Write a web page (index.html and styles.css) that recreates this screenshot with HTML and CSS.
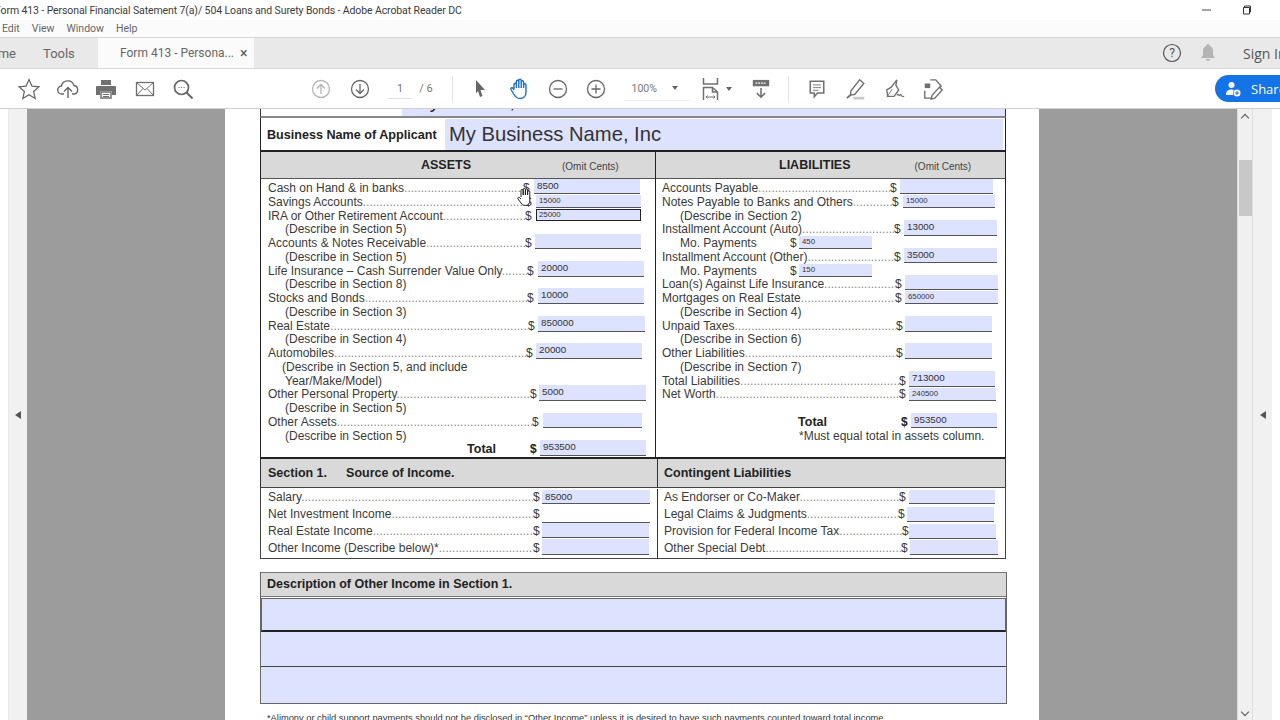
FILE: index.html
```html
<!DOCTYPE html>
<html lang="en">
<head>
<meta charset="utf-8">
<title>Form 413</title>
<link rel="stylesheet" href="styles.css">
</head>
<body>
<div class="app">
  <div class="titlebar">
    <span class="title">Form 413 - Personal Financial Satement 7(a)/ 504 Loans and Surety Bonds - Adobe Acrobat Reader DC</span>
    <div class="winctl">
      <svg class="win-min" width="12" height="12" viewBox="0 0 12 12"><path d="M1 6h9" stroke="#444" fill="none"/></svg>
      <svg class="win-max" width="12" height="12" viewBox="0 0 12 12"><path d="M2.500 3.500h6v6.500h-6zM3.500 3.500v-1.500h6v6h-1" stroke="#333" fill="none"/></svg>
    </div>
  </div>
  <div class="menubar"><span>Edit</span><span>View</span><span>Window</span><span>Help</span></div>
  <div class="tabbar">
    <span class="tab-home">Home</span>
    <span class="tab-tools">Tools</span>
    <div class="tab-active"><span>Form 413 - Persona...</span><b>×</b></div>
    <div class="tab-right">
      <svg width="20" height="20" viewBox="0 0 20 20"><circle cx="10" cy="10" r="8.500" fill="none" stroke="#555" stroke-width="1.200"/><text x="10" y="14" text-anchor="middle" class="q">?</text></svg>
      <svg class="bell" width="18" height="20" viewBox="0 0 18 20"><path d="M9 1c1 0 1.400.7 1.400 1.500C13 3.400 14 5.500 14 8v4l2 3H2l2-3V8c0-2.500 1-4.600 3.600-5.500C7.600 1.700 8 1 9 1zM7 16h4c0 1.200-.9 2-2 2s-2-.8-2-2z" fill="#b4b4b4"/></svg>
      <span class="signin">Sign In</span>
    </div>
  </div>
  <div class="toolbar">
    <div class="tb-group tb-left">
      <div class="tb"><svg width="24" height="24" viewBox="0 0 24 24"><path d="M12 2.500l2.900 6.600 7.100.7-5.400 4.700 1.600 7-6.200-3.700-6.200 3.700 1.600-7L2 9.800l7.100-.7z" fill="none" stroke="#666" stroke-width="1.200"/></svg></div>
      <div class="tb"><svg width="24" height="24" viewBox="0 0 24 24"><path d="M8 17H6a4 4 0 0 1-.6-8A6.500 6.500 0 0 1 18 8.500 4.300 4.300 0 0 1 18 17h-2M12 21v-10M8 14.500l4-4 4 4" fill="none" stroke="#666" stroke-width="1.400"/></svg></div>
      <div class="tb"><svg class="nudge" width="24" height="24" viewBox="0 0 24 24"><path d="M7 3h10v5H7zM3 9h18a1 1 0 0 1 1 1v8h-4v-4H6v4H2v-8a1 1 0 0 1 1-1z" fill="#707070"/><path d="M7 15h10v6H7z" fill="#fff" stroke="#707070" stroke-width="1.500"/><path d="M9 17.500h6M9 19.500h6" stroke="#707070"/></svg></div>
      <div class="tb"><svg width="24" height="24" viewBox="0 0 24 24"><rect x="3.500" y="5.500" width="17" height="13" fill="none" stroke="#707070" stroke-width="1.300"/><path d="M4 6l8 7 8-7M4 18l6-6.500M20 18l-6-6.500" fill="none" stroke="#707070"/></svg></div>
      <div class="tb"><svg class="nudge" width="24" height="24" viewBox="0 0 24 24"><circle cx="10.500" cy="10.500" r="7" fill="none" stroke="#666" stroke-width="1.700"/><path d="M15.500 15.500l6 6" stroke="#666" stroke-width="2"/><path d="M7.500 10.500h1M10 10.500h1M12.500 10.500h1" stroke="#666"/></svg></div>
    </div>
    <div class="tb-group tb-page">
      <div class="tb"><svg width="20" height="20" viewBox="0 0 20 20"><circle cx="10" cy="10" r="8.500" fill="none" stroke="#b5b5b5" stroke-width="1.300"/><path d="M10 15V5.500M6 9.500l4-4 4 4" fill="none" stroke="#b5b5b5" stroke-width="1.300"/></svg></div>
      <div class="tb"><svg width="20" height="20" viewBox="0 0 20 20"><circle cx="10" cy="10" r="8.500" fill="none" stroke="#666" stroke-width="1.300"/><path d="M10 5v9.500M6 10.500l4 4 4-4" fill="none" stroke="#666" stroke-width="1.300"/></svg></div>
      <span class="pg-num">1</span><span class="pg-of">/ 6</span>
    </div>
    <i class="tb-sep sep-a"></i>
    <div class="tb-group tb-view">
      <div class="tb"><svg width="20" height="22" viewBox="0 0 20 22"><path d="M6 2l9 10h-4.500l2 6-2.500 1-2-6L6 15.500z" fill="#666"/></svg></div>
      <div class="tb"><svg width="22" height="24" viewBox="0 0 22 24"><path d="M6 12V7.500a1.200 1.200 0 0 1 2.400 0V11M8.400 11V4.500a1.200 1.200 0 0 1 2.400 0V11M10.800 11V3.500a1.200 1.200 0 0 1 2.400 0V11M13.200 11V5a1.200 1.200 0 0 1 2.400 0v6M15.600 11V8a1.200 1.200 0 0 1 2.400 0v7c0 4-2.500 6.500-6 6.500-3 0-4.500-1.500-6-4l-3-5c-.7-1.300 1-2.500 2-1.300L6 13" fill="#fff" stroke="#1b6fc2" stroke-width="1.400"/></svg></div>
      <div class="tb"><svg width="20" height="20" viewBox="0 0 20 20"><circle cx="10" cy="10" r="8.500" fill="none" stroke="#666" stroke-width="1.300"/><path d="M5.500 10h9" stroke="#666" stroke-width="1.300"/></svg></div>
      <div class="tb"><svg width="20" height="20" viewBox="0 0 20 20"><circle cx="10" cy="10" r="8.500" fill="none" stroke="#666" stroke-width="1.300"/><path d="M5.500 10h9M10 5.500v9" stroke="#666" stroke-width="1.300"/></svg></div>
    </div>
    <div class="zoomval"><span>100%</span><i class="caret"></i></div>
    <div class="fitgrp">
      <svg width="18" height="24" viewBox="0 0 18 24"><path d="M1.500 1v6h14V1" fill="none" stroke="#707070" stroke-width="1.500"/><path d="M1.500 23V10.500h9l5 4.500v8M10.500 10.500V15h5" fill="none" stroke="#707070" stroke-width="1.500"/><path d="M4 20h9M4 20l1.500-1.500M4 20l1.500 1.500M13 20l-1.500-1.500M13 20l-1.500 1.500" stroke="#707070" fill="none"/></svg>
      <i class="caret"></i>
    </div>
    <div class="tb tb-read"><svg width="20" height="22" viewBox="0 0 22 24"><path d="M2 2h18v7H2z" fill="#707070"/><path d="M5 5.500h12" stroke="#fff" stroke-width="1.500" stroke-dasharray="2 1"/><path d="M11 11v10M6.500 16.500l4.500 4.500 4.500-4.500" fill="none" stroke="#707070" stroke-width="1.700"/></svg></div>
    <i class="tb-sep sep-b"></i>
    <div class="tb-group tb-tools">
      <div class="tb"><svg width="18" height="20" viewBox="0 0 20 22"><path d="M2.500 2.500h15v13h-7l-3.500 4v-4H2.500z" fill="none" stroke="#707070" stroke-width="1.700"/><path d="M5.500 6.500h9M5.500 9.500h9M5.500 12.500h6" stroke="#707070"/></svg></div>
      <div class="tb"><svg width="22" height="22" viewBox="0 0 24 24"><path d="M16 2l4.500 4-10 12-4.500.5.500-4.500z" fill="none" stroke="#707070" stroke-width="1.500"/><path d="M2 22l4-3.500" stroke="#707070" stroke-width="2"/><path d="M9 22h12" stroke="#c9c9c9" stroke-width="3"/></svg></div>
      <div class="tb"><svg width="22" height="22" viewBox="0 0 24 24"><path d="M14 2l-1 6 3 5-5 7H4l-1-7 5-3 6-8z" fill="none" stroke="#707070" stroke-width="1.500"/><path d="M3 21l6-9" stroke="#707070"/><path d="M14 19c2-3 2 1 3 0s1-2 2 0 1 1 3 1" fill="none" stroke="#707070" stroke-width="1.300"/></svg></div>
      <div class="tb"><svg width="22" height="22" viewBox="0 0 24 24"><path d="M9 2h6l6 7-2 2M3 14v8h7" fill="none" stroke="#707070" stroke-width="1.500"/><path d="M3 6h6v5H3z" fill="#707070"/><path d="M19 10l3 3-8 9-4 1 1-4z" fill="none" stroke="#707070" stroke-width="1.500"/></svg></div>
    </div>
    <div class="share"><svg width="16" height="16" viewBox="0 0 16 16"><circle cx="6.500" cy="4" r="3" fill="#fff"/><path d="M1 14c0-4 2-5.500 5.500-5.500 1 0 2 .2 2.700.5-1.200.8-1.700 3-1 5z" fill="#fff"/><circle cx="12" cy="12" r="3.500" fill="#fff"/><path d="M10 12h4M12 10v4" stroke="#1473e6"/></svg><span>Share</span></div>
  </div>

  <div class="viewer">
    <div class="margin-l"></div>
    <div class="strip strip-l"><i class="arrow"></i></div>
    <div class="canvas"></div>
    <div class="page">
      <div class="form">
        <div class="top-row"><div class="top-fld"><span>My Names,</span></div></div>
        <div class="biz-row">
          <span class="biz-lab">Business Name of Applicant</span>
          <div class="biz-fld">My Business Name, Inc</div>
        </div>
        <div class="balance">
          <div class="col col-a">
            <div class="col-head">
              <span class="head-title">ASSETS</span><span class="omit">(Omit Cents)</span>
            </div>
            <div class="rows">
              <div class="row a-cash"><span class="lab">Cash on Hand &amp; in banks<i>..............................................................................</i></span><span class="cur">$</span><span class="fld">8500</span></div>
              <div class="row a-sav"><span class="lab">Savings Accounts<i>..............................................................................</i></span><span class="cur">$</span><span class="fld sm">15000</span></div>
              <div class="row a-ira"><span class="lab">IRA or Other Retirement Account<i>..............................................................................</i></span><span class="cur">$</span><span class="fld sm focus">25000</span></div>
              <div class="row sub">(Describe in Section 5)</div>
              <div class="row a-note"><span class="lab">Accounts &amp; Notes Receivable<i>..............................................................................</i></span><span class="cur">$</span><span class="fld"></span></div>
              <div class="row sub">(Describe in Section 5)</div>
              <div class="row a-life"><span class="lab">Life Insurance – Cash Surrender Value Only<i>..............................................................................</i></span><span class="cur">$</span><span class="fld">20000</span></div>
              <div class="row sub">(Describe in Section 8)</div>
              <div class="row a-stock"><span class="lab">Stocks and Bonds<i>..............................................................................</i></span><span class="cur">$</span><span class="fld">10000</span></div>
              <div class="row sub">(Describe in Section 3)</div>
              <div class="row a-real"><span class="lab">Real Estate<i>..............................................................................</i></span><span class="cur">$</span><span class="fld">850000</span></div>
              <div class="row sub">(Describe in Section 4)</div>
              <div class="row a-auto"><span class="lab">Automobiles<i>..............................................................................</i></span><span class="cur">$</span><span class="fld">20000</span></div>
              <div class="row sub sub-a">(Describe in Section 5, and include</div>
              <div class="row sub">Year/Make/Model)</div>
              <div class="row a-opp"><span class="lab">Other Personal Property<i>..............................................................................</i></span><span class="cur">$</span><span class="fld">5000</span></div>
              <div class="row sub">(Describe in Section 5)</div>
              <div class="row a-oa"><span class="lab">Other Assets<i>..............................................................................</i></span><span class="cur">$</span><span class="fld"></span></div>
              <div class="row sub">(Describe in Section 5)</div>
              <div class="row a-tot"><span class="lab total-lab">Total</span><span class="cur bold">$</span><span class="fld">953500</span></div>
            </div>
          </div>
          <div class="col col-l">
            <div class="col-head">
              <span class="head-title">LIABILITIES</span><span class="omit">(Omit Cents)</span>
            </div>
            <div class="rows">
              <div class="row l-pay"><span class="lab">Accounts Payable<i>..............................................................................</i></span><span class="cur">$</span><span class="fld"></span></div>
              <div class="row l-note"><span class="lab">Notes Payable to Banks and Others<i>..............................................................................</i></span><span class="cur">$</span><span class="fld sm">15000</span></div>
              <div class="row sub">(Describe in Section 2)</div>
              <div class="row l-inst"><span class="lab">Installment Account (Auto)<i>..............................................................................</i></span><span class="cur">$</span><span class="fld">13000</span></div>
              <div class="row l-mo1"><span class="lab mo">Mo. Payments</span><span class="cur">$</span><span class="fld sm">450</span></div>
              <div class="row l-oth"><span class="lab">Installment Account (Other)<i>..............................................................................</i></span><span class="cur">$</span><span class="fld">35000</span></div>
              <div class="row l-mo2"><span class="lab mo">Mo. Payments</span><span class="cur">$</span><span class="fld sm">150</span></div>
              <div class="row l-loan"><span class="lab">Loan(s) Against Life Insurance<i>..............................................................................</i></span><span class="cur">$</span><span class="fld"></span></div>
              <div class="row l-mort"><span class="lab">Mortgages on Real Estate<i>..............................................................................</i></span><span class="cur">$</span><span class="fld sm">650000</span></div>
              <div class="row sub">(Describe in Section 4)</div>
              <div class="row l-tax"><span class="lab">Unpaid Taxes<i>..............................................................................</i></span><span class="cur">$</span><span class="fld"></span></div>
              <div class="row sub">(Describe in Section 6)</div>
              <div class="row l-ol"><span class="lab">Other Liabilities<i>..............................................................................</i></span><span class="cur">$</span><span class="fld"></span></div>
              <div class="row sub">(Describe in Section 7)</div>
              <div class="row l-tl"><span class="lab">Total Liabilities<i>..............................................................................</i></span><span class="cur">$</span><span class="fld">713000</span></div>
              <div class="row l-nw"><span class="lab">Net Worth<i>..............................................................................</i></span><span class="cur">$</span><span class="fld sm">240500</span></div>
              <div class="row"></div>
              <div class="row l-tot"><span class="lab total-lab">Total</span><span class="cur bold">$</span><span class="fld">953500</span></div>
              <div class="row must">*Must equal total in assets column.</div>
            </div>
          </div>
        </div>
        <div class="sec-head">
          <div class="sec-a"><b>Section 1.</b><b class="sec-name">Source of Income.</b></div>
          <div class="sec-b"><b>Contingent Liabilities</b></div>
        </div>
        <div class="income">
          <div class="inc inc-a">
            <div class="row irow i-sal"><span class="lab">Salary<i>..............................................................................................</i></span><span class="cur">$</span><span class="fld">85000</span></div>
            <div class="row irow i-inv"><span class="lab">Net Investment Income<i>..............................................................................</i></span><span class="cur">$</span><span class="fld nofill"></span></div>
            <div class="row irow i-re"><span class="lab">Real Estate Income<i>..............................................................................</i></span><span class="cur">$</span><span class="fld"></span></div>
            <div class="row irow i-ot"><span class="lab">Other Income (Describe below)*<i>..............................................................................</i></span><span class="cur">$</span><span class="fld"></span></div>
          </div>
          <div class="inc inc-b">
            <div class="row irow c-end"><span class="lab">As Endorser or Co-Maker<i>..............................................................................</i></span><span class="cur">$</span><span class="fld"></span></div>
            <div class="row irow c-leg"><span class="lab">Legal Claims &amp; Judgments<i>..............................................................................</i></span><span class="cur">$</span><span class="fld"></span></div>
            <div class="row irow c-fed"><span class="lab">Provision for Federal Income Tax<i>..............................................................................</i></span><span class="cur">$</span><span class="fld"></span></div>
            <div class="row irow c-deb"><span class="lab">Other Special Debt<i>..............................................................................</i></span><span class="cur">$</span><span class="fld"></span></div>
          </div>
        </div>
        <div class="desc">
          <div class="desc-head">Description of Other Income in Section 1.</div>
          <div class="desc-fld d1"></div>
          <div class="desc-fld d2"></div>
          <div class="desc-fld d3"></div>
        </div>
        <div class="foot">*Alimony or child support payments should not be disclosed in “Other Income” unless it is desired to have such payments counted toward total income</div>
      </div>
      <svg class="hand" width="18" height="20" viewBox="0 0 18 20"><path d="M5 10V3.500a1.100 1.100 0 0 1 2.200 0V8M7.200 8V2.500a1.100 1.100 0 0 1 2.200 0V8M9.400 8V3a1.100 1.100 0 0 1 2.200 0v5M11.600 8V5a1.100 1.100 0 0 1 2.200 0v9c0 2.500-1.800 4.500-4.500 4.500-2 0-3.300-1-4.300-2.500L2 12c-.8-1.300.8-2.400 1.800-1.300L5 12" fill="#fff" stroke="#222" stroke-width="1"/></svg>
    </div>
    <div class="canvas"></div>
    <div class="scroll">
      <i class="sc-up"></i>
      <div class="thumb"></div>
      <i class="sc-down"></i>
    </div>
    <div class="strip strip-r"><i class="arrow"></i></div>
    <div class="margin-r"></div>
  </div>
</div>
</body>
</html>
```

FILE: styles.css
```css
* { box-sizing: border-box; }
html, body { margin: 0; padding: 0; height: 100%; overflow: hidden; background: #fff; }
.app { width: 1280px; height: 720px; display: flex; flex-direction: column; font-family: "Open Sans", "Noto Sans", sans-serif; color: #333; overflow: hidden; }

.titlebar { height: 20px; display: flex; align-items: center; background: #fff; position: relative; }
.title { font-family: Roboto, sans-serif; font-size: 10.500px; letter-spacing: -.11px; color: #3c3c3c; margin-left: -5px; white-space: nowrap; }
.winctl { margin-left: auto; display: flex; align-items: center; }
.win-min { margin-right: 28px; }
.win-max { margin-right: 27px; }

.menubar { height: 18px; display: flex; align-items: center; gap: 12px; padding-left: 2px; font-family: Roboto, sans-serif; font-size: 10.500px; color: #666; background: #fbfbfb; border-bottom: 1px solid #d6d6d6; }

.tabbar { height: 31px; background: #e9e9e9; display: flex; align-items: center; border-bottom: 1px solid #d9d9d9; position: relative; font-family: Roboto, sans-serif; }
.tab-home { font-size: 13px; color: #666; margin-left: -19px; width: 62px; }
.tab-tools { font-size: 13px; color: #666; width: 55px; }
.tab-active { width: 156px; height: 30px; background: #fbfbfb; display: flex; align-items: center; font-size: 12px; color: #666; padding-left: 22px; }
.tab-active b { font-weight: 400; font-size: 14px; margin-left: 6px; color: #555; }
.tab-right { margin-left: auto; display: flex; align-items: center; margin-right: -10px; }
.q { font: 12px Roboto, sans-serif; fill: #555; }
.bell { margin-left: 17px; }
.signin { font-family: "Open Sans", sans-serif; font-size: 14px; color: #555; margin-left: 26px; width: 47px; white-space: nowrap; }

.toolbar { height: 40px; flex: none; background: #fff; border-bottom: 1px solid #cfcfcf; display: flex; align-items: center; position: relative; overflow: hidden; }
.tb-group { display: flex; align-items: center; }
.tb { width: 38.6px; display: flex; justify-content: center; align-items: center; flex: none; }
.nudge { margin-left: -1px; }
.tb-left { margin-left: 10px; }
.tb-page { margin-left: 99px; }
.pg-num { width: 24px; margin-left: 9px; text-align: center; font-family: Roboto, sans-serif; font-size: 11px; color: #777; border-bottom: 1px solid #e2e2e2; padding-bottom: 3px; padding-top: 3px; }
.pg-of { font-family: Roboto, sans-serif; font-size: 11px; color: #777; margin-left: 7px; width: 29px; }
.tb-sep { width: 1px; height: 26px; background: #e4e4e4; flex: none; }
.sep-a { margin-left: 4px; }
.tb-view { margin-left: 8px; }
.zoomval { width: 66px; margin-left: 8px; display: flex; align-items: center; font-family: Roboto, sans-serif; font-size: 10.500px; color: #777; padding-left: 8px; gap: 15px; height: 24px; border-bottom: 1px solid #eee; }
.caret { width: 0; height: 0; border: 3px solid transparent; border-top: 4px solid #666; border-bottom: 0; display: block; }
.fitgrp { display: flex; align-items: center; gap: 6px; margin-left: 3px; width: 45px; }
.fitgrp svg { margin-left: 9px; flex: none; }
.tb-read { margin-left: 4px; }
.sep-b { margin-left: 8px; }
.tb-tools { margin-left: 9px; }
.share { position: absolute; left: 1215px; top: 6px; width: 90px; height: 27px; border-radius: 14px 0 0 14px; background: #1473e6; display: flex; align-items: center; color: #fff; font-size: 13px; padding-left: 10px; gap: 10px; }

.viewer { flex: 1; min-height: 0; display: flex; }
.margin-l { width: 8px; flex: none; background: #fff; }
.margin-r { width: 8px; flex: none; background: #fff; }
.strip { flex: none; background: #f1f1f1; display: flex; align-items: center; justify-content: center; }
.strip-l { width: 19px; border-left: 1px solid #e8e8e8; padding-top: 0; }
.strip-r { width: 20px; border-left: 1px solid #dedede; }
.arrow { border: 4.500px solid transparent; border-right: 6px solid #555; border-left: 0; display: block; }
.canvas { width: 198px; flex: none; background: #9c9c9c; }
.scroll { width: 15px; flex: none; background: #f0f0f0; display: flex; flex-direction: column; align-items: center; border-left: 1px solid #ddd; padding-top: 6px; }
.sc-up, .sc-down { width: 6px; height: 6px; border-left: 1.500px solid #555; border-top: 1.500px solid #555; transform: rotate(45deg); display: block; flex: none; }
.sc-down { transform: rotate(225deg); margin-top: auto; margin-bottom: 5px; }
.thumb { width: 13px; height: 56px; background: #c8c8c8; margin-top: 39px; flex: none; }

.page { width: 814px; flex: none; background: #fff; padding-left: 35px; position: relative; overflow: hidden; }
.form { width: 746px; font-family: "Liberation Sans", Arial, sans-serif; color: #3a3a3a; font-size: 12px; }
.hand { position: absolute; left: 291px; top: 78px; }

.top-row { height: 9px; border-left: 1px solid #333; border-right: 1px solid #333; border-bottom: 2px solid #888; padding-left: 141px; overflow: hidden; }
.top-fld { height: 8px; background: #dde2ff; padding-left: 11px; overflow: hidden; }
.top-fld span { display: block; font-size: 20.200px; line-height: 20px; margin-top: -18px; color: #222; }
.biz-row { height: 34px; display: flex; align-items: center; border: 1px solid #222; border-top: 0; border-bottom: 2px solid #222; }
.biz-lab { font-weight: 700; font-size: 12.600px; color: #222; margin-left: 6px; width: 178px; flex: none; white-space: nowrap; padding-top: 2px; }
.biz-fld { width: 558px; height: 31px; background: #dde2ff; font-size: 20.200px; line-height: 30px; padding-left: 4px; color: #333; }

.balance { display: flex; border-left: 1px solid #222; border-right: 1px solid #222; height: 305px; }
.col-a { width: 395px; border-right: 1px solid #222; flex: none; }
.col-l { flex: 1; min-width: 0; }
.col-head { height: 27px; background: #d9d9d9; border-bottom: 1px solid #555; display: flex; align-items: center; position: relative; }
.head-title { font-weight: 700; font-size: 12.500px; color: #222; }
.col-a .head-title { margin-left: 160px; }
.col-a .omit { margin-left: 91px; }
.col-l .head-title { margin-left: 123px; }
.col-l .omit { margin-left: 64px; }
.omit { font-size: 10px; color: #444; padding-top: 2px; }
.rows { padding-top: 2px; padding-left: 7px; }
.col-l .rows { padding-left: 6px; }

.row { display: flex; align-items: flex-start; height: 13.75px; line-height: 15.750px; white-space: nowrap; flex: none; }
.lab { display: block; overflow: hidden; white-space: nowrap; flex: none; width: var(--lab); }
.lab i { font-style: normal; color: #888; }
.cur { width: 8px; flex: none; }
.bold, .total-lab { font-weight: 700; color: #222; }
.total-lab { text-align: right; padding-right: 34px; font-size: 12.500px; }
.fld { display: block; flex: none; background: #dde2ff; border-bottom: 1px solid #555; width: var(--fw); height: var(--fh, 15px); margin-left: var(--gap, 0px); margin-top: var(--top, 0px); font-size: 9.800px; line-height: 14px; padding-left: 3px; color: #333; }
.fld.sm { font-size: 7.800px; line-height: 12px; }
.fld.focus { border: 1px solid #222; line-height: 10px; padding-left: 2px; }
.fld.nofill { background: #fff; }
.sub { padding-left: 17px; }
.col-l .sub { padding-left: 18px; }
.sub-a { padding-left: 14px; }
.mo { padding-left: 18px; }
.must { padding-left: 137px; }

.a-cash { --lab: 255px; --gap: 3px; --fw: 106px; --top: -2px; --fh: 15px; }
.a-sav { --lab: 257px; --gap: 3px; --fw: 105px; --top: .25px; --fh: 13px; }
.a-ira { --lab: 257px; --gap: 3px; --fw: 105px; --top: .5px; --fh: 12px; }
.a-note { --lab: 257px; --gap: 2px; --fw: 106px; --top: -2px; --fh: 15px; }
.a-life { --lab: 259px; --gap: 3px; --fw: 106px; --top: -2.500px; --fh: 16px; }
.a-stock { --lab: 259px; --gap: 3px; --fw: 106px; --top: -3px; --fh: 16px; }
.a-real { --lab: 260px; --gap: 2px; --fw: 107px; --top: -2.500px; --fh: 16px; }
.a-auto { --lab: 258px; --gap: 2px; --fw: 106px; --top: -3px; --fh: 16px; }
.a-opp { --lab: 262px; --gap: 1px; --fw: 107px; --top: -2.250px; --fh: 16px; }
.a-oa { --lab: 264px; --gap: 3px; --fw: 99px; --top: -1.750px; --fh: 15px; }
.a-tot { --lab: 262px; --gap: 2px; --fw: 106px; --top: -2.250px; --fh: 16px; }

.l-pay { --lab: 228px; --gap: 2px; --fw: 93px; --top: -2px; --fh: 15px; }
.l-note { --lab: 230px; --gap: 3px; --fw: 92px; --top: .25px; --fh: 13px; }
.l-inst { --lab: 232px; --gap: 2px; --fw: 93px; --top: -2.250px; --fh: 16px; }
.l-mo1 { --lab: 128px; --gap: 1px; --fw: 73px; --top: 0px; --fh: 13px; }
.l-oth { --lab: 232px; --gap: 2px; --fw: 93px; --top: -1.750px; --fh: 15px; }
.l-mo2 { --lab: 128px; --gap: 1px; --fw: 73px; --top: 0px; --fh: 13px; }
.l-loan { --lab: 233px; --gap: 2px; --fw: 93px; --top: -2.250px; --fh: 15px; }
.l-mort { --lab: 233px; --gap: 2px; --fw: 93px; --top: 0px; --fh: 13px; }
.l-tax { --lab: 234px; --gap: 1px; --fw: 87px; --top: -2.500px; --fh: 16px; }
.l-ol { --lab: 234px; --gap: 1px; --fw: 87px; --top: -3px; --fh: 16px; }
.l-tl { --lab: 237px; --gap: 2px; --fw: 86px; --top: -2.500px; --fh: 16px; }
.l-nw { --lab: 237px; --gap: 2px; --fw: 87px; --top: .750px; --fh: 13px; }
.l-tot { --lab: 239px; --gap: 2px; --fw: 86px; --top: -1.750px; --fh: 15px; }
.l-tot .total-lab { padding-right: 74px; }

.sec-head { height: 31px; display: flex; background: #d9d9d9; border: 1px solid #333; border-top: 2px solid #222; border-bottom: 1px solid #444; font-size: 12.500px; color: #222; }
.sec-a { width: 397px; border-right: 1px solid #333; padding-left: 7px; line-height: 28px; flex: none; }
.sec-name { margin-left: 19px; }
.sec-b { padding-left: 6px; line-height: 28px; }
.income { display: flex; height: 71px; border: 1px solid #444; border-top: 0; padding-top: 1px; }
.inc-a { width: 397px; border-right: 1px solid #333; padding-left: 7px; flex: none; }
.inc-b { padding-left: 6px; flex: 1; min-width: 0; }
.irow { height: 17px; line-height: 17px; }
.i-sal { --lab: 265px; --gap: 1px; --fw: 108px; --top: 1px; --fh: 14px; }
.i-inv { --lab: 265px; --gap: 1px; --fw: 108px; --top: 2px; --fh: 15px; }
.i-re { --lab: 265px; --gap: 1px; --fw: 107px; --top: 0px; --fh: 15px; }
.i-ot { --lab: 265px; --gap: 1px; --fw: 107px; --top: -1px; --fh: 16px; }
.c-end { --lab: 235px; --gap: 2px; --fw: 86px; --top: 1px; --fh: 14px; }
.c-leg { --lab: 234px; --gap: 1px; --fw: 87px; --top: 1px; --fh: 15px; }
.c-fed { --lab: 238px; --gap: -1px; --fw: 87px; --top: 1px; --fh: 15px; }
.c-deb { --lab: 237px; --gap: 1px; --fw: 88px; --top: 0px; --fh: 15px; }

.desc { margin-top: 13px; width: 747px; border: 1px solid #666; border-top: 1px solid #777; height: 132px; }
.desc-head { height: 24px; background: #d9d9d9; border-bottom: 1px solid #777; font-weight: 700; font-size: 12.500px; color: #222; line-height: 22px; padding-left: 6px; }
.desc-fld { background: #dde2ff; }
.d1 { height: 34px; margin-top: 1px; border: 1px solid #666; border-bottom: 2px solid #222; }
.d2 { height: 35px; border-bottom: 1px solid #444; }
.d3 { height: 36px; }
.foot { font-size: 9.300px; color: #333; margin-top: 9px; padding-left: 7px; white-space: nowrap; line-height: 10px; }
```
